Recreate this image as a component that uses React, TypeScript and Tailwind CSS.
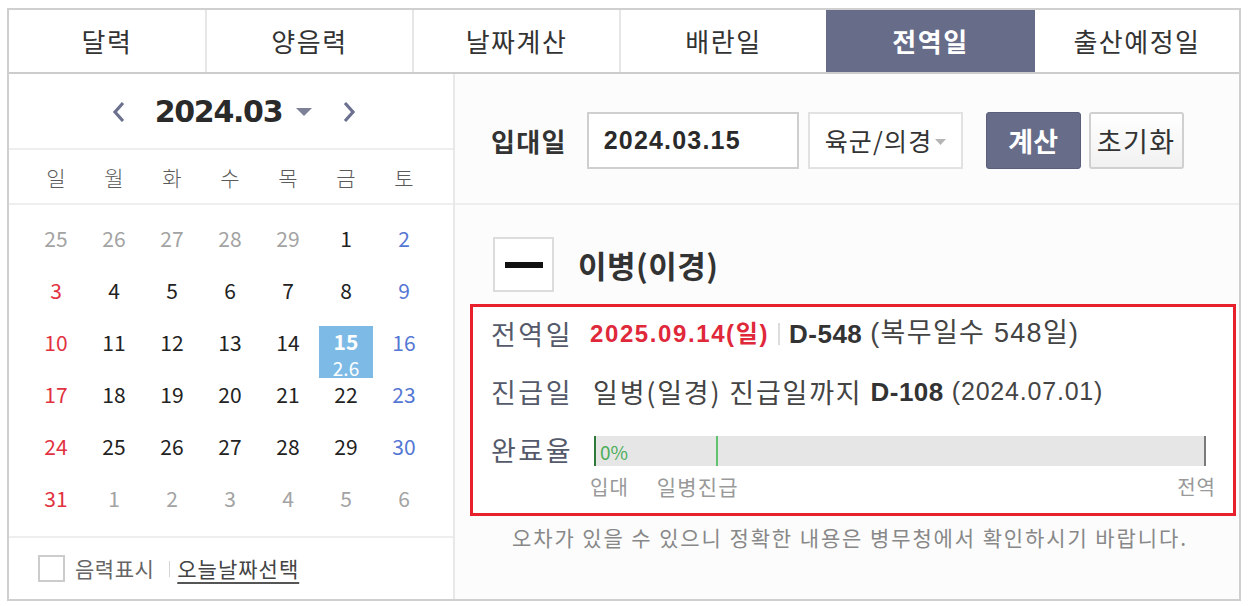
import React from 'react';

const TABS: { label: string; w: string; active?: boolean }[] = [
  { label: '달력', w: 'w-[196px]' },
  { label: '양음력', w: 'w-[207px]' },
  { label: '날짜계산', w: 'w-[207px]' },
  { label: '배란일', w: 'w-[207px]' },
  { label: '전역일', w: 'w-[209px]', active: true },
  { label: '출산예정일', w: 'flex-1' },
];

const WEEKDAYS = ['일', '월', '화', '수', '목', '금', '토'];

type Cell = { d: number; other?: boolean; sel?: boolean };
const WEEKS: Cell[][] = [
  [{ d: 25, other: true }, { d: 26, other: true }, { d: 27, other: true }, { d: 28, other: true }, { d: 29, other: true }, { d: 1 }, { d: 2 }],
  [{ d: 3 }, { d: 4 }, { d: 5 }, { d: 6 }, { d: 7 }, { d: 8 }, { d: 9 }],
  [{ d: 10 }, { d: 11 }, { d: 12 }, { d: 13 }, { d: 14 }, { d: 15, sel: true }, { d: 16 }],
  [{ d: 17 }, { d: 18 }, { d: 19 }, { d: 20 }, { d: 21 }, { d: 22 }, { d: 23 }],
  [{ d: 24 }, { d: 25 }, { d: 26 }, { d: 27 }, { d: 28 }, { d: 29 }, { d: 30 }],
  [{ d: 31 }, { d: 1, other: true }, { d: 2, other: true }, { d: 3, other: true }, { d: 4, other: true }, { d: 5, other: true }, { d: 6, other: true }],
];

function cellColor(c: Cell, col: number) {
  if (c.other) return 'text-[#a3a3a3]';
  if (col === 0) return 'text-[#e2323f]';
  if (col === 6) return 'text-[#5577d4]';
  return 'text-[#222222]';
}

function LeftPanel() {
  return (
    <div className="w-[446px] shrink-0 border-r-2 border-[#e8e8e8] bg-white flex flex-col">
      <div className="h-[76px] border-b-2 border-[#eeeeee] flex items-center justify-center pl-[6px] pt-[2px]">
        <svg width="14" height="24" viewBox="0 0 14 24" className="mr-[29px]">
          <path d="M11 3 L3 12 L11 21" fill="none" stroke="#6c718f" strokeWidth="3.2" strokeLinejoin="miter" />
        </svg>
        <span className="font-['DejaVu_Sans',sans-serif] font-bold text-[30px] leading-none tracking-[-1.3px] text-[#2a2a2a]">
          2024.03
        </span>
        <svg width="16" height="9" viewBox="0 0 16 9" className="ml-[14px] mr-[30px]">
          <path d="M0 0 L16 0 L8 8 Z" fill="#7d8198" />
        </svg>
        <svg width="14" height="24" viewBox="0 0 14 24">
          <path d="M3 3 L11 12 L3 21" fill="none" stroke="#6c718f" strokeWidth="3.2" strokeLinejoin="miter" />
        </svg>
      </div>
      <div className="h-[55px] border-b-2 border-[#eeeeee] pl-[18px]">
        <div className="grid grid-cols-7 w-[406px] h-full">
          {WEEKDAYS.map((w) => (
            <div key={w} className="flex items-center justify-center text-[21px] text-[#5a5a5a] font-light pt-[2px]">
              {w}
            </div>
          ))}
        </div>
      </div>
      <div className="h-[333px] border-b-2 border-[#eeeeee] pt-[7px] pl-[18px]">
        <div className="grid grid-cols-7 w-[406px]">
          {WEEKS.flat().map((c, i) => {
            const col = i % 7;
            return (
              <div key={i} className="relative h-[52px] flex items-center justify-center">
                {c.sel ? (
                  <div className="absolute left-[2px] top-[10px] w-[54px] h-[52px] bg-[#7dbbe6] flex flex-col items-center text-white">
                    <span className="text-[21px] font-bold leading-none mt-[5px]">15</span>
                    <span className="text-[19px] leading-none mt-[6px]">2.6</span>
                  </div>
                ) : (
                  <span className={`text-[21px] leading-none ${cellColor(c, col)}`}>{c.d}</span>
                )}
              </div>
            );
          })}
        </div>
      </div>
      <div className="flex-1 flex items-center pl-[29px]">
        <div className="w-[27px] h-[27px] border-2 border-[#cccccc] bg-white" />
        <span className="ml-[10px] text-[21px] tracking-[0.5px] text-[#666666] leading-none">음력표시</span>
        <span className="ml-[15px] mr-[7px] w-[1px] h-[16px] bg-[#d5d5d5]" />
        <span className="text-[21px] tracking-[1px] text-[#444444] leading-none underline underline-offset-[5px] decoration-[#555555]">
          오늘날짜선택
        </span>
      </div>
    </div>
  );
}

function RightPanel() {
  return (
    <div className="flex-1 bg-[#fcfcfc] flex flex-col">
      <div className="h-[131px] border-b-2 border-[#eeeeee] flex items-center pl-[36px] pt-[4px]">
        <span className="text-[26px] font-bold text-[#333333] leading-none tracking-[1.3px]">입대일</span>
        <div className="ml-[20px] w-[212px] h-[57px] border-2 border-[#cfcfcf] bg-white flex items-center pl-[15px]">
          <span className="font-['Liberation_Sans',sans-serif] font-bold text-[25px] tracking-[1.2px] text-[#2a2a2a] leading-none">
            2024.03.15
          </span>
        </div>
        <div className="ml-[9px] w-[155px] h-[57px] border-2 border-[#e2e2e2] bg-white flex items-center pl-[15px]">
          <span className="text-[25px] tracking-[1.2px] text-[#333333] leading-none">육군/의경</span>
          <svg width="11" height="6" viewBox="0 0 11 6" className="ml-[3px] mt-[2px]">
            <path d="M0 0 L11 0 L5.5 6 Z" fill="#b5b5b5" />
          </svg>
        </div>
        <div className="ml-[23px] w-[95px] h-[57px] rounded-[3px] bg-[#676c89] border border-[#5a5f7c] flex items-center justify-center">
          <span className="text-[27px] font-bold text-white leading-none">계산</span>
        </div>
        <div className="ml-[8px] w-[95px] h-[57px] rounded-[3px] bg-gradient-to-b from-white to-[#f1f1f1] border-2 border-[#d0d0d0] flex items-center justify-center">
          <span className="text-[27px] tracking-[1.5px] text-[#333333] leading-none">초기화</span>
        </div>
      </div>
      <div className="pl-[38px] pt-[32px] flex items-center">
        <div className="w-[61px] h-[55px] border-2 border-[#dcdcdc] bg-white flex items-center justify-center">
          <div className="w-[38px] h-[6px] bg-[#111111]" />
        </div>
        <span className="ml-[24px] text-[31px] font-bold text-[#333333] leading-none tracking-[0.5px]">이병(이경)</span>
      </div>
      <div className="ml-[15px] mr-[3px] mt-[12px] h-[212px] border-[3px] border-[#e8202b] bg-white pl-[18px] flex flex-col">
        <div className="h-[53px] flex items-center">
          <span className="w-[99px] text-[27px] text-[#555a6b] tracking-[2.5px] leading-none">전역일</span>
          <span className="font-['Liberation_Sans','Noto_Sans_CJK_KR',sans-serif] font-bold text-[24px] text-[#e0283b] tracking-[1.6px] leading-none">
            2025.09.14(일)
          </span>
          <span className="mx-[9px] w-[2px] h-[22px] bg-[#dddddd]" />
          <span className="font-['Liberation_Sans',sans-serif] font-bold text-[26px] tracking-[0.5px] text-[#333333] leading-none">D-548</span>
          <span className="ml-[8px] font-['Liberation_Sans','Noto_Sans_CJK_KR',sans-serif] text-[27px] text-[#444444] tracking-[1.3px] leading-none">
            (복무일수 548일)
          </span>
        </div>
        <div className="h-[63px] flex items-center">
          <span className="w-[102px] text-[27px] text-[#555a6b] tracking-[2.5px] leading-none">진급일</span>
          <span className="text-[27px] text-[#444444] tracking-[1.8px] leading-none">일병(일경) 진급일까지</span>
          <span className="ml-[8px] font-['Liberation_Sans',sans-serif] font-bold text-[26px] tracking-[0.5px] text-[#333333] leading-none">D-108</span>
          <span className="ml-[8px] font-['Liberation_Sans',sans-serif] text-[25px] text-[#444444] tracking-[0.8px] leading-none">
            (2024.07.01)
          </span>
        </div>
        <div className="h-[53px] flex items-center">
          <span className="w-[103px] text-[27px] text-[#555a6b] tracking-[2.5px] leading-none">완료율</span>
          <div className="relative w-[612px] h-[30px] bg-[#e6e6e6] flex items-center mt-[3px]">
            <div className="absolute left-0 top-0 w-[2px] h-[30px] bg-[#2f7a3b]" />
            <div className="absolute left-[122px] top-0 w-[2px] h-[30px] bg-[#5fc36f]" />
            <div className="absolute right-0 top-0 w-[2px] h-[30px] bg-[#7a7a7a]" />
            <span className="ml-[6px] text-[19px] text-[#4cae5a] leading-none">0%</span>
          </div>
        </div>
        <div className="flex items-center w-[725px] pl-[99px] mt-[0px]">
          <span className="text-[20px] tracking-[1px] text-[#999999] leading-none">입대</span>
          <span className="ml-[28px] text-[21px] tracking-[1.2px] text-[#999999] leading-none">일병진급</span>
          <span className="flex-1" />
          <span className="text-[20px] tracking-[1px] text-[#999999] leading-none">전역</span>
        </div>
      </div>
      <div className="mt-[11px] text-center text-[21px] tracking-[1.9px] text-[#888888] leading-none pl-[6px]">
        오차가 있을 수 있으니 정확한 내용은 병무청에서 확인하시기 바랍니다.
      </div>
    </div>
  );
}

export default function App() {
  return (
    <div className="w-[1251px] h-[606px] bg-white pt-[8px] pl-[7px] font-['Noto_Sans_CJK_KR',sans-serif] text-[#333333]">
      <div className="w-[1234px] h-[593px] border-2 border-[#cfcfcf] flex flex-col">
        <div className="flex h-[64px] border-b-2 border-[#cccccc] shrink-0">
          {TABS.map((t, i) => (
            <div
              key={t.label}
              className={`${t.w} flex items-center justify-center text-[26px] tracking-[1.5px] leading-none ${
                i > 0 && !t.active && !TABS[i - 1].active ? 'border-l-2 border-[#e6e6e6]' : ''
              } ${t.active ? 'bg-[#676c89] text-white font-bold' : 'bg-white text-[#333333]'}`}
            >
              {t.label}
            </div>
          ))}
        </div>
        <div className="flex flex-1">
          <LeftPanel />
          <RightPanel />
        </div>
      </div>
    </div>
  );
}
